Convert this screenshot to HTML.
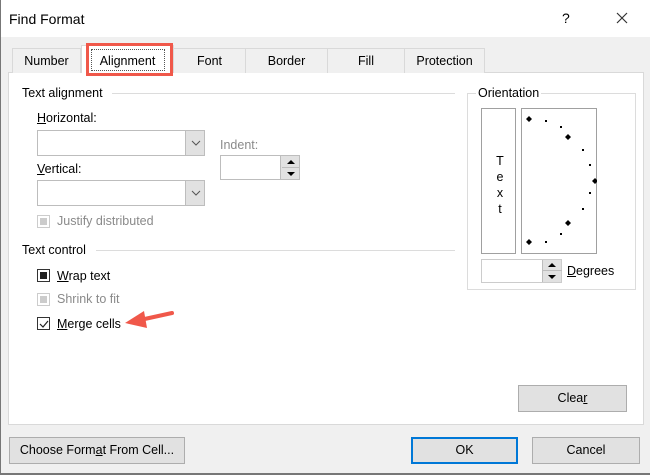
<!DOCTYPE html><html><head><style>
*{margin:0;padding:0;box-sizing:border-box}
body{width:650px;height:475px;background:#f0f0f0;font-family:"Liberation Sans",sans-serif;font-size:12px;color:#000;position:relative;overflow:hidden}
.a{position:absolute}
.title{left:0;top:0;width:650px;height:37px;background:#fff}
.tab{top:48px;height:25px;border:1px solid #d9d9d9;border-bottom:none;background:#f0f0f0;text-align:center;line-height:24px;font-size:12.5px}
.panel{left:8px;top:72px;width:636px;height:353px;background:#fff;border:1px solid #d9d9d9}
.lbl{font-size:12.5px}
.dis{color:#8a8a8a}
.combo{border:1px solid #bdbdbd;background:#fff}
.combo .b{position:absolute;right:0;top:0;width:19px;height:100%;background:#e1e1e1;border-left:1px solid #bdbdbd}
.cb{width:13px;height:13px;border:1px solid #333;background:#fff}
.btn{border:1px solid #adadad;background:#e1e1e1;text-align:center;font-size:12.5px}
.line{height:1px;background:#dcdcdc}
</style></head><body>
<div class="a title"></div>
<div class="a" style="left:0;top:0;width:1px;height:475px;background:#777"></div>
<div class="a" style="left:0;top:473px;width:650px;height:2px;background:#777"></div>
<div class="a" style="left:9px;top:11px;font-size:14px">Find Format</div>
<div class="a" style="left:562px;top:10px;font-size:14px">?</div>
<svg class="a" style="left:616px;top:12px" width="12" height="12"><path d="M1 1L11 11M11 1L1 11" stroke="#333" stroke-width="1.2"/></svg>
<div class="a panel"></div>
<div class="a tab" style="left:12px;width:69px">Number</div>
<div class="a tab" style="left:173px;width:73px">Font</div>
<div class="a tab" style="left:245px;width:83px">Border</div>
<div class="a tab" style="left:327px;width:78px">Fill</div>
<div class="a tab" style="left:404px;width:81px">Protection</div>
<div class="a tab" style="left:81px;top:45px;height:28px;width:93px;background:#fff;line-height:30px">Alignment</div>
<div class="a" style="left:91px;top:49px;width:74px;height:22px;border:1px dotted #555"></div>
<div class="a" style="left:86px;top:43px;width:87px;height:33px;border:3px solid #f0584a"></div>

<div class="a lbl" style="left:22px;top:86px">Text alignment</div>
<div class="a line" style="left:112px;top:93px;width:343px"></div>
<div class="a lbl" style="left:37px;top:111px"><u>H</u>orizontal:</div>
<div class="a combo" style="left:37px;top:130px;width:168px;height:26px"><div class="b"></div></div>
<svg class="a" style="left:191px;top:140px" width="10" height="6"><path d="M1 1L5 5L9 1" stroke="#555" fill="none"/></svg>
<div class="a lbl dis" style="left:220px;top:138px">Indent:</div>
<div class="a combo" style="left:220px;top:155px;width:80px;height:25px"><div class="b"></div></div>
<div class="a" style="left:282px;top:167px;width:18px;height:1px;background:#bdbdbd"></div>
<svg class="a" style="left:286px;top:159px" width="10" height="18"><path d="M1 5L5 1L9 5Z M1 13L9 13L5 17Z" fill="#000"/></svg>
<div class="a lbl" style="left:37px;top:162px"><u>V</u>ertical:</div>
<div class="a combo" style="left:37px;top:180px;width:168px;height:26px"><div class="b"></div></div>
<svg class="a" style="left:191px;top:190px" width="10" height="6"><path d="M1 1L5 5L9 1" stroke="#555" fill="none"/></svg>
<div class="a cb" style="left:37px;top:215px;border-color:#ccc"><div style="margin:2px;width:7px;height:7px;background:#ccc"></div></div>
<div class="a lbl dis" style="left:57px;top:214px">Justify distributed</div>

<div class="a lbl" style="left:22px;top:243px">Text control</div>
<div class="a line" style="left:96px;top:250px;width:359px"></div>
<div class="a cb" style="left:37px;top:269px"><div style="margin:2px;width:7px;height:7px;background:#222"></div></div>
<div class="a lbl" style="left:57px;top:269px"><u>W</u>rap text</div>
<div class="a cb" style="left:37px;top:293px;border-color:#ccc"><div style="margin:2px;width:7px;height:7px;background:#ccc"></div></div>
<div class="a lbl dis" style="left:57px;top:292px">Shrink to fit</div>
<div class="a cb" style="left:37px;top:317px"></div>
<svg class="a" style="left:38px;top:318px" width="12" height="12"><path d="M2 6L5 9L10 3" stroke="#222" fill="none" stroke-width="1.2"/></svg>
<div class="a lbl" style="left:57px;top:317px"><u>M</u>erge cells</div>
<svg class="a" style="left:120px;top:305px" width="70" height="25"><path d="M52 8L20 15" stroke="#f0584a" stroke-width="4" stroke-linecap="round"/><path d="M5 18L24 6L27 23Z" fill="#f0584a"/></svg>

<div class="a" style="left:467px;top:93px;width:169px;height:197px;border:1px solid #dcdcdc"></div>
<div class="a lbl" style="left:476px;top:86px;background:#fff;padding:0 2px">Orientation</div>
<div class="a" style="left:481px;top:108px;width:35px;height:146px;border:1px solid #a0a0a0"></div>
<div class="a" style="left:495px;top:153px;font-size:12.5px;line-height:16px;text-align:center;width:10px">T<br>e<br>x<br>t</div>
<div class="a" style="left:521px;top:108px;width:76px;height:146px;border:1px solid #a0a0a0"></div>
<svg class="a" style="left:521px;top:108px" width="76" height="146">
<g fill="#000"><path d="M8 8l3 3-3 3-3-3z M47 26l3 3-3 3-3-3z M74 70l3 3-3 3-3-3z M47 112l3 3-3 3-3-3z M8 131l3 3-3 3-3-3z"/>
<rect x="24" y="12" width="2" height="2"/><rect x="39" y="18" width="2" height="2"/><rect x="61" y="41" width="2" height="2"/><rect x="68" y="56" width="2" height="2"/><rect x="68" y="84" width="2" height="2"/><rect x="61" y="100" width="2" height="2"/><rect x="39" y="125" width="2" height="2"/><rect x="24" y="133" width="2" height="2"/></g></svg>
<div class="a combo" style="left:481px;top:259px;width:81px;height:24px;border-color:#ccc"><div class="b"></div></div>
<div class="a" style="left:543px;top:270px;width:19px;height:1px;background:#bdbdbd"></div>
<svg class="a" style="left:547px;top:262px" width="10" height="18"><path d="M1 5L5 1L9 5Z M1 13L9 13L5 17Z" fill="#000"/></svg>
<div class="a lbl" style="left:567px;top:264px"><u>D</u>egrees</div>

<div class="a btn" style="left:518px;top:385px;width:109px;height:27px;line-height:25px">Clea<u>r</u></div>
<div class="a btn" style="left:9px;top:437px;width:176px;height:27px;line-height:25px">Choose Form<u>a</u>t From Cell...</div>
<div class="a btn" style="left:411px;top:437px;width:107px;height:27px;line-height:23px;border:2px solid #0078d7">OK</div>
<div class="a btn" style="left:532px;top:437px;width:108px;height:27px;line-height:25px">Cancel</div>
</body></html>
